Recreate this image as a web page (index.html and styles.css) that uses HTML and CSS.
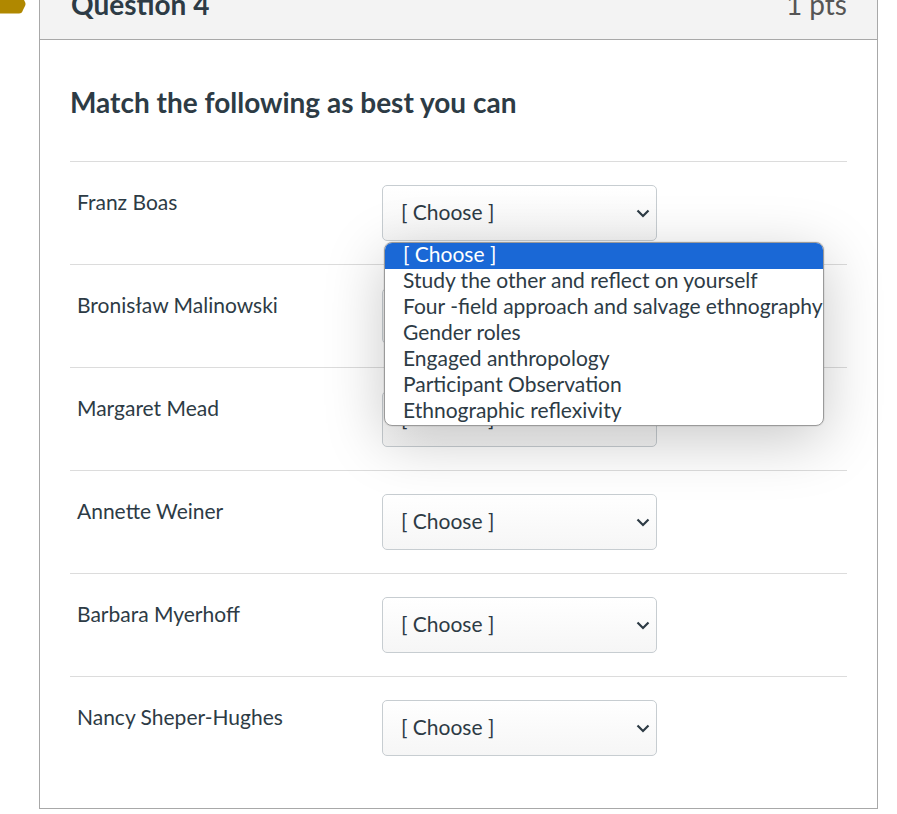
FILE: index.html
```html
<!DOCTYPE html>
<html lang="en">
<head>
<meta charset="utf-8">
<title>Question 4</title>
<link rel="stylesheet" href="styles.css">
</head>
<body>
<div class="page">
  <svg class="flag" width="26" height="14" viewBox="0 0 26 14" aria-hidden="true">
    <path d="M0 -6 H19 Q21 -6 22 -4 L25 2 Q26 4 25 6 L23 10 Q22 13.5 19 13.5 H0 Z" fill="#b08800"/>
  </svg>
  <div class="card">
    <div class="card-header">
      <span class="q-title">Question 4</span>
      <span class="q-pts">1 pts</span>
    </div>
    <div class="card-body">
      <h2 class="prompt">Match the following as best you can</h2>
      <div class="rows">
        <div class="row">
          <div class="label">Franz Boas</div>
          <div class="select-wrap">
            <div class="select"><span>[ Choose ]</span><svg class="chev" width="14" height="9" viewBox="0 0 14 9"><path d="M1.5 1.5 L7 7 L12.5 1.5" fill="none" stroke="#2d3b45" stroke-width="2.2"/></svg></div>
            <ul class="dropdown">
              <li class="active">[ Choose ]</li>
              <li>Study the other and reflect on yourself</li>
              <li>Four -field approach and salvage ethnography</li>
              <li>Gender roles</li>
              <li>Engaged anthropology</li>
              <li>Participant Observation</li>
              <li>Ethnographic reflexivity</li>
            </ul>
          </div>
        </div>
        <div class="row">
          <div class="label">Bronisław Malinowski</div>
          <div class="select-wrap">
            <div class="select"><span>[ Choose ]</span><svg class="chev" width="14" height="9" viewBox="0 0 14 9"><path d="M1.5 1.5 L7 7 L12.5 1.5" fill="none" stroke="#2d3b45" stroke-width="2.2"/></svg></div>
          </div>
        </div>
        <div class="row">
          <div class="label">Margaret Mead</div>
          <div class="select-wrap">
            <div class="select"><span>[ Choose ]</span><svg class="chev" width="14" height="9" viewBox="0 0 14 9"><path d="M1.5 1.5 L7 7 L12.5 1.5" fill="none" stroke="#2d3b45" stroke-width="2.2"/></svg></div>
          </div>
        </div>
        <div class="row">
          <div class="label">Annette Weiner</div>
          <div class="select-wrap">
            <div class="select"><span>[ Choose ]</span><svg class="chev" width="14" height="9" viewBox="0 0 14 9"><path d="M1.5 1.5 L7 7 L12.5 1.5" fill="none" stroke="#2d3b45" stroke-width="2.2"/></svg></div>
          </div>
        </div>
        <div class="row">
          <div class="label">Barbara Myerhoff</div>
          <div class="select-wrap">
            <div class="select"><span>[ Choose ]</span><svg class="chev" width="14" height="9" viewBox="0 0 14 9"><path d="M1.5 1.5 L7 7 L12.5 1.5" fill="none" stroke="#2d3b45" stroke-width="2.2"/></svg></div>
          </div>
        </div>
        <div class="row">
          <div class="label">Nancy Sheper-Hughes</div>
          <div class="select-wrap">
            <div class="select"><span>[ Choose ]</span><svg class="chev" width="14" height="9" viewBox="0 0 14 9"><path d="M1.5 1.5 L7 7 L12.5 1.5" fill="none" stroke="#2d3b45" stroke-width="2.2"/></svg></div>
          </div>
        </div>
      </div>
    </div>
  </div>
</div>
</body>
</html>
```

FILE: styles.css
```css
* { box-sizing: border-box; }
html, body { margin: 0; padding: 0; background: #fff; }
body {
  font-family: Lato, "Open Sans", "Liberation Sans", sans-serif;
  color: #2d3b45;
}
.page {
  position: relative;
  display: flow-root;
  padding-left: 39px;
  width: 897px;
}
.flag {
  position: absolute;
  left: 0;
  top: 0;
  z-index: 2;
}
.card {
  width: 839px;
  margin-top: -13px;
  border: 1px solid #a8a8a8;
  border-top: none;
  background: #fff;
}
.card-header {
  height: 53px;
  background: #f3f3f3;
  border-bottom: 1px solid #a8a8a8;
  display: flex;
  justify-content: space-between;
  padding: 0 30px 0 31px;
}
.q-title {
  font-size: 28px;
  font-weight: 700;
  line-height: normal;
  color: #2d3b45;
}
.q-pts {
  font-size: 28px;
  font-weight: 400;
  line-height: normal;
  color: #555;
}
.card-body {
  padding: 45px 30px 29px 30px;
}
.prompt {
  margin: 0 0 42px 0;
  font-size: 28px;
  font-weight: 700;
  line-height: normal;
}
.row {
  display: flex;
  height: 103px;
  border-top: 1px solid #dcdcdc;
}
.label {
  width: 312px;
  padding: 27px 0 0 7px;
  font-size: 21px;
  line-height: normal;
}
.select-wrap {
  position: relative;
  margin-top: 23px;
  width: 275px;
  height: 56px;
}
.select {
  height: 56px;
  border: 1px solid #c7cdd1;
  border-radius: 5px;
  background: linear-gradient(#ffffff, #f6f6f6);
  display: flex;
  align-items: center;
  justify-content: space-between;
  padding: 0 6px 3px 18px;
  font-size: 21px;
}
.chev { margin-top: 4px; }
.dropdown {
  position: absolute;
  left: 2px;
  top: 57px;
  width: 440px;
  margin: 0;
  padding: 0;
  list-style: none;
  background: #fff;
  border: 1px solid #9a9a9a;
  border-radius: 8px;
  overflow: hidden;
  box-shadow: 0 0 0 1px rgba(0, 0, 0, 0.05), 0 14px 60px rgba(0, 0, 0, 0.22);
  z-index: 5;
}
.dropdown li {
  height: 26px;
  line-height: 22px;
  padding-left: 18px;
  font-size: 21px;
  color: #2d3b45;
  white-space: nowrap;
}
.dropdown li.active {
  background: #1a68d6;
  color: #fff;
}
```
